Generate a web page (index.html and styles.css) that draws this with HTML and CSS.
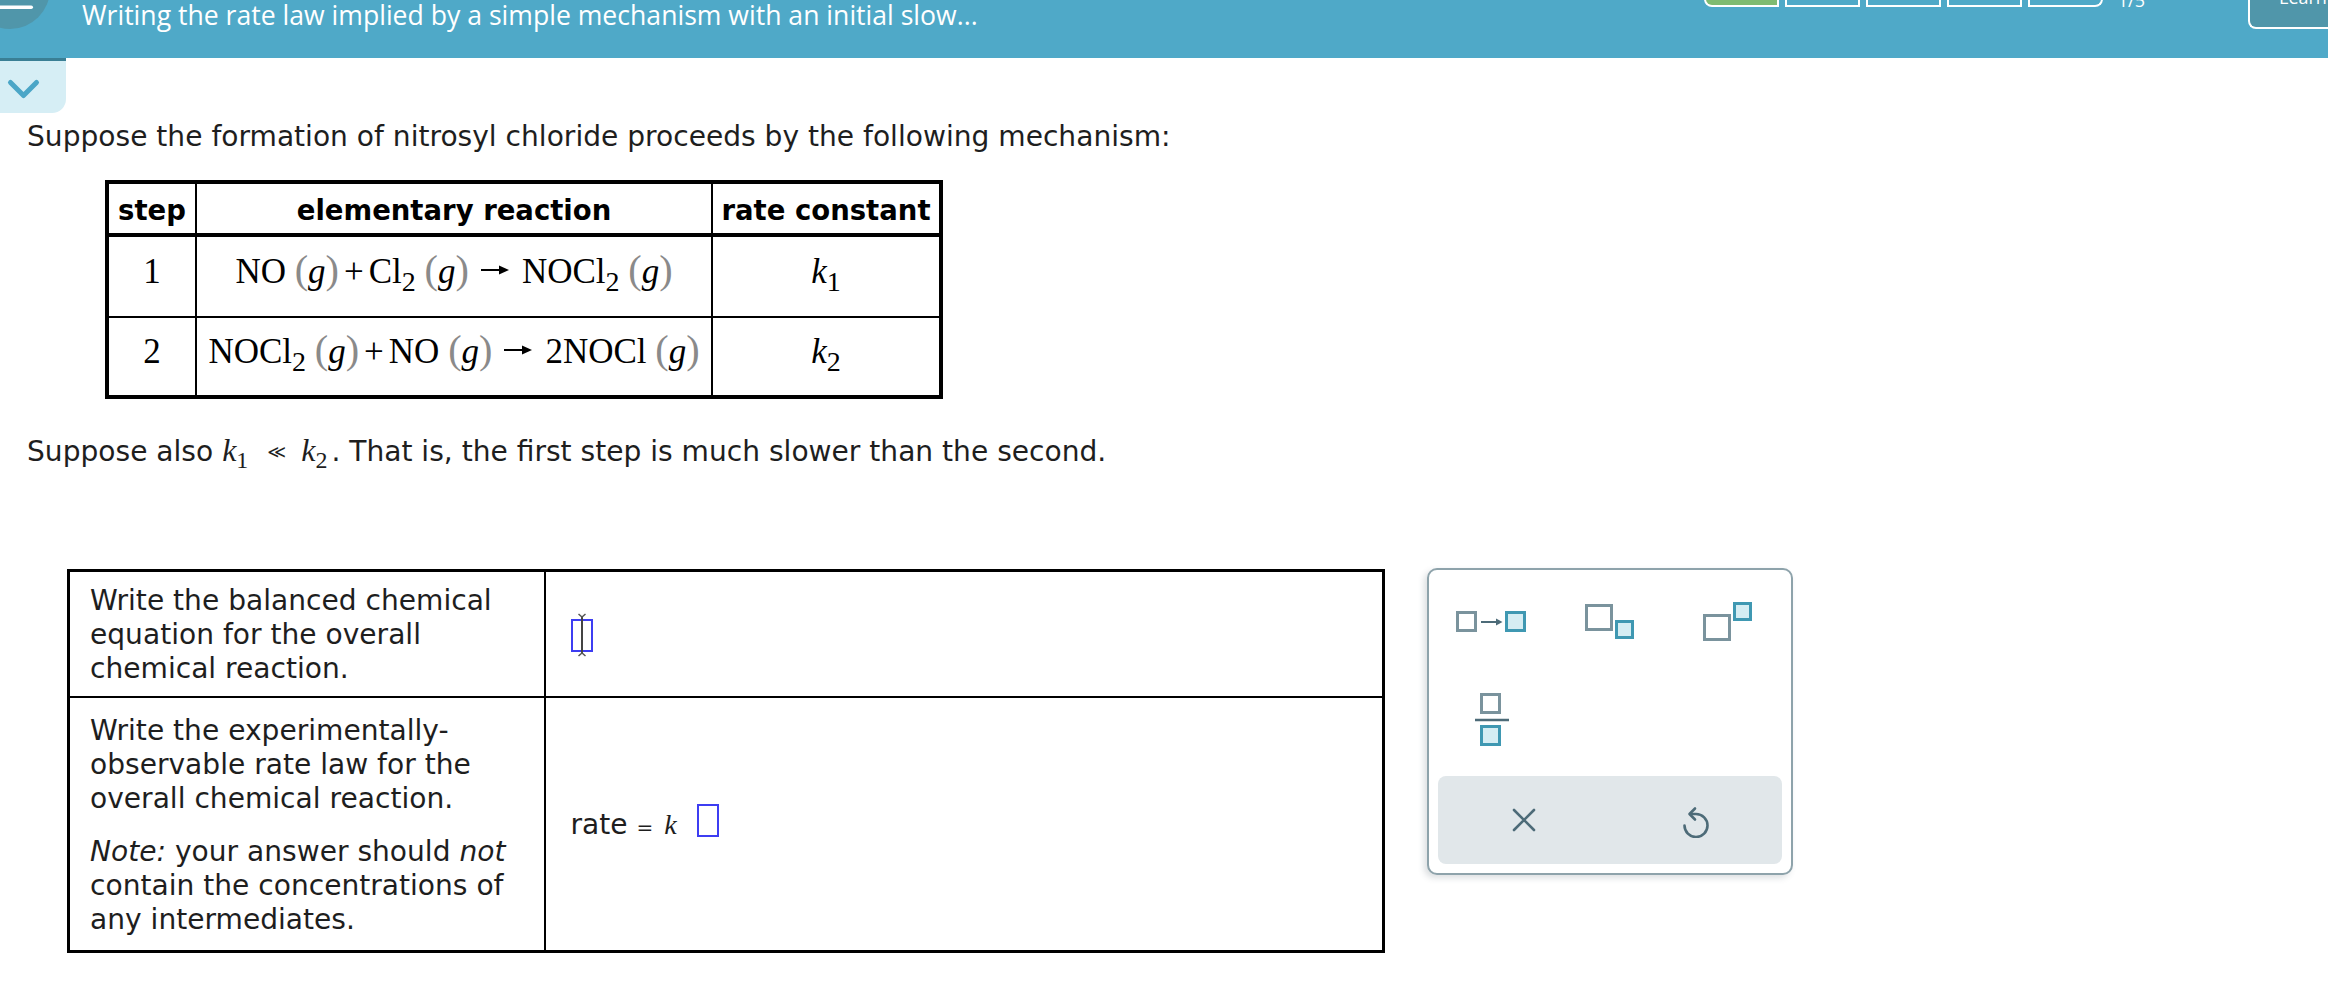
FILE: index.html
```html
<!DOCTYPE html>
<html lang="en">
<head>
<meta charset="utf-8">
<title>Rate law</title>
<link rel="stylesheet" href="styles.css">
</head>
<body>
<header class="topbar">
  <svg class="menu-btn" width="80" height="80" viewBox="0 0 80 80"><circle cx="40" cy="40" r="40" fill="#5096aa"/><rect x="18" y="56.5" width="45" height="3.5" rx="1.75" fill="#fff"/></svg>
  <div class="title">Writing the rate law implied by a simple mechanism with an initial slow...</div>
  <div class="progress"><span class="seg done"></span><span class="seg"></span><span class="seg"></span><span class="seg"></span><span class="seg last"></span></div>
  <div class="count">1/5</div>
  <div class="learn">Learn</div>
</header>
<div class="tab"><svg width="36" height="22" viewBox="0 0 36 22"><path d="M4.5 4.5 L17.5 17.5 L30.5 4.5" fill="none" stroke="#4ba6c7" stroke-width="5" stroke-linecap="round" stroke-linejoin="round"/></svg></div>
<main class="content">
  <p class="intro">Suppose the formation of nitrosyl chloride proceeds by the following mechanism:</p>
  <table class="mech">
    <colgroup><col class="c-step"><col class="c-rx"><col class="c-k"></colgroup>
    <tr class="mh"><th>step</th><th>elementary reaction</th><th>rate constant</th></tr>
    <tr class="m1">
      <td class="num">1</td>
      <td class="eqn">NO <span class="pa">(</span><i>g</i><span class="pa">)</span><span class="op">+</span>Cl<sub>2</sub> <span class="pa">(</span><i>g</i><span class="pa">)</span><svg class="arr" width="30" height="12" viewBox="0 0 30 12"><path d="M1 6 H21" stroke="#000" stroke-width="2"/><path d="M19 1.5 L29 6 L19 10.5 Z" fill="#000"/></svg>NOCl<sub>2</sub> <span class="pa">(</span><i>g</i><span class="pa">)</span></td>
      <td class="kc"><i>k</i><sub>1</sub></td>
    </tr>
    <tr class="m2">
      <td class="num">2</td>
      <td class="eqn">NOCl<sub>2</sub> <span class="pa">(</span><i>g</i><span class="pa">)</span><span class="op">+</span>NO <span class="pa">(</span><i>g</i><span class="pa">)</span><svg class="arr" width="30" height="12" viewBox="0 0 30 12"><path d="M1 6 H21" stroke="#000" stroke-width="2"/><path d="M19 1.5 L29 6 L19 10.5 Z" fill="#000"/></svg>2NOCl <span class="pa">(</span><i>g</i><span class="pa">)</span></td>
      <td class="kc"><i>k</i><sub>2</sub></td>
    </tr>
  </table>
  <p class="also">Suppose also <i class="kk">k</i><sub class="ks">1</sub><span class="ll">≪</span><i class="kk">k</i><sub class="ks ks-end">2</sub>. That is, the first step is much slower than the second.</p>
  <div class="work">
    <table class="answers">
      <tr class="a1">
        <td class="q"><p>Write the balanced chemical equation for the overall chemical reaction.</p></td>
        <td class="a"><span class="slot slot-active"><svg class="ibeam" width="12" height="44" viewBox="0 0 12 44"><path d="M6 3 V41" stroke="#444" stroke-width="2"/><path d="M2.5 1 L6 4 L9.5 1 M2.5 43 L6 40 L9.5 43" fill="none" stroke="#555" stroke-width="1.5"/></svg></span></td>
      </tr>
      <tr class="a2">
        <td class="q"><p>Write the experimentally-observable rate law for the overall chemical reaction.</p><p><em>Note:</em> your answer should <em>not</em> contain the concentrations of any intermediates.</p></td>
        <td class="a"><span class="rate">rate</span><span class="eqs">=</span><i class="kv">k</i><span class="slot"></span></td>
      </tr>
    </table>
    <div class="keypad">
      <div class="keys">
        <div class="key"><svg width="72" height="22" viewBox="0 0 72 22"><rect x="1.5" y="1.5" width="18" height="18" fill="#fff" stroke="#7a939d" stroke-width="3"/><path d="M25 11 H42" stroke="#4d6b78" stroke-width="2"/><path d="M40 7.5 L46.5 11 L40 14.5 Z" fill="#4d6b78"/><rect x="50.5" y="1.5" width="18" height="18" fill="#d5edf3" stroke="#3f98b2" stroke-width="3"/></svg></div>
        <div class="key"><svg width="50" height="36" viewBox="0 0 50 36"><rect x="1.5" y="1.5" width="25" height="24" fill="#fff" stroke="#7a939d" stroke-width="3"/><rect x="31.5" y="17.5" width="16" height="16" fill="#d5edf3" stroke="#3f98b2" stroke-width="3"/></svg></div>
        <div class="key"><svg width="50" height="40" viewBox="0 0 50 40"><rect x="1.5" y="13.5" width="25" height="24" fill="#fff" stroke="#7a939d" stroke-width="3"/><rect x="31.5" y="1.5" width="16" height="16" fill="#d5edf3" stroke="#3f98b2" stroke-width="3"/></svg></div>
        <div class="key"><svg width="36" height="54" viewBox="0 0 36 54"><rect x="7.5" y="1.5" width="18" height="18" fill="#fff" stroke="#7a939d" stroke-width="3"/><path d="M1 27 H35" stroke="#4d6b78" stroke-width="2.5"/><rect x="7.5" y="33.5" width="18" height="18" fill="#d5edf3" stroke="#3f98b2" stroke-width="3"/></svg></div>
      </div>
      <div class="actions">
        <div class="act"><svg width="26" height="26" viewBox="0 0 26 26"><path d="M3 3 L23 23 M23 3 L3 23" stroke="#4d6b78" stroke-width="2.6" stroke-linecap="round"/></svg></div>
        <div class="act"><svg width="30" height="36" viewBox="0 0 30 36"><path d="M10 12 H15 A11.5 11.5 0 1 1 3.5 23.5" fill="none" stroke="#4d6b78" stroke-width="2.6" stroke-linecap="round"/><path d="M14 6.5 L8.5 12 L14 17.5" fill="none" stroke="#4d6b78" stroke-width="2.6" stroke-linecap="round" stroke-linejoin="round"/></svg></div>
      </div>
    </div>
  </div>
</main>
</body>
</html>
```
FILE: styles.css
```css
* { box-sizing: border-box; }
html, body { margin: 0; padding: 0; background: #fff; }
body {
  font-family: "DejaVu Sans", Verdana, sans-serif;
  color: #1e1e1e;
  width: 2328px;
  height: 993px;
  overflow: hidden;
}

/* ---------- top bar ---------- */
.topbar {
  display: flex;
  align-items: flex-start;
  height: 58px;
  background: #4fa9c8;
  overflow: hidden;
}
.menu-btn { flex: none; display: block; margin: -51px 0 0 -30px; }
.title {
  margin-left: 32px;
  font-family: "Open Sans", sans-serif;
  font-size: 26.6px;
  line-height: 30px;
  color: #fff;
  white-space: nowrap;
}
.progress { margin-left: auto; margin-top: -20px; display: flex; gap: 6px; flex: none; }
.seg { width: 75px; height: 27px; border: 2px solid #fff; border-top: 0; }
.seg.done { background: #7fbb71; border-bottom-left-radius: 8px; }
.seg.last { border-bottom-right-radius: 8px; }
.count {
  flex: none;
  margin: -10px 0 0 15px;
  font-family: "Open Sans", sans-serif;
  font-size: 18px;
  line-height: 20px;
  color: #fff;
}
.learn {
  flex: none;
  width: 80px;
  height: 40px;
  margin: -11px 0 0 103px;
  padding-left: 29px;
  border: 2px solid #fff;
  border-top: 0;
  border-right: 0;
  border-bottom-left-radius: 8px;
  background: #5096aa;
  color: #fff;
  font-family: "Open Sans", sans-serif;
  font-size: 18px;
  line-height: 16px;
  white-space: nowrap;
  overflow: hidden;
}

/* ---------- collapse tab ---------- */
.tab {
  width: 66px;
  height: 55px;
  border-top: 3px solid #3a7f95;
  background: #d6eef5;
  border-bottom-right-radius: 14px;
  padding: 17px 0 0 6px;
}
.tab svg { display: block; }

/* ---------- content ---------- */
.content { padding-left: 27px; font-size: 28.1px; line-height: 34px; }
.intro { margin: 6.5px 0 0; }

.mech {
  margin: 26px 0 0 78px;
  width: 834px;
  table-layout: fixed;
  border-collapse: collapse;
  border: 4px solid #000;
}
.c-step { width: 89px; }
.c-rx { width: 516px; }
.c-k { width: 229px; }
.mech th, .mech td { border: 2px solid #000; padding: 0; text-align: center; vertical-align: middle; }
.mech th { font-size: 27.5px; font-weight: bold; color: #000; border-bottom-width: 4px; padding-top: 3px; }
.mh { height: 53px; }
.m1 { height: 82px; }
.m2 { height: 80px; }
.mech td {
  font-family: "Liberation Serif", "Times New Roman", serif;
  font-size: 35px;
  color: #000;
  white-space: nowrap;
  padding-bottom: 9px;
}
.mech sub { font-size: 0.8em; vertical-align: -0.3em; line-height: 0; }
.pa { color: #8a8a8a; font-size: 1.15em; line-height: 0; }
.op { margin: 0 5px; }
.arr { margin: 0 12px 0 11px; vertical-align: 0.18em; }

.also { margin: 34px 0 0; }
.kk { font-family: "Liberation Serif", "Times New Roman", serif; font-size: 32px; }
.ks { font-family: "Liberation Serif", "Times New Roman", serif; font-size: 24px; vertical-align: -0.3em; line-height: 0; }
.ks-end { margin-right: 4px; }
.ll { font-size: 18px; margin: 0 15px 0 19px; vertical-align: 0.12em; }

/* ---------- answer area ---------- */
.work {
  display: flex;
  align-items: flex-start;
  gap: 42px;
  margin: 100px 0 0 40px;
}
.answers {
  width: 1318px;
  table-layout: fixed;
  border-collapse: collapse;
  border: 3px solid #000;
}
.answers td { border: 2px solid #000; vertical-align: middle; }
.answers .q { width: 476px; padding: 12px 20px 10px; }
.answers .a { padding-left: 25px; }
.answers p { margin: 0; }
.answers p + p { margin-top: 19px; }
.a1 { height: 124px; }
.a2 { height: 254px; }

.slot {
  display: inline-block;
  width: 22px;
  height: 33px;
  border: 2px solid #3d3df2;
  vertical-align: -3px;
}
.slot-active { display: inline-flex; justify-content: center; align-items: center; vertical-align: middle; }
.ibeam { flex: none; margin: -8px 0; }
.eqs { font-size: 20px; margin: 0 11px 0 9px; }
.kv { font-family: "Liberation Serif", "Times New Roman", serif; font-size: 28px; margin-right: 20px; }

/* ---------- keypad ---------- */
.keypad {
  flex: none;
  width: 366px;
  height: 307px;
  margin-top: -1px;
  border: 2px solid #8ea3ab;
  border-radius: 10px;
  background: #fff;
  box-shadow: -3px 3px 6px rgba(60, 80, 90, 0.18);
}
.keys {
  display: grid;
  grid-template-columns: repeat(3, 118px);
  grid-auto-rows: 98px;
  height: 199px;
  padding: 3px 0 0 4px;
}
.key { display: flex; align-items: center; justify-content: center; }
.key svg, .act svg { display: block; }
.actions {
  margin: 7px 9px 0;
  height: 88px;
  background: #e1e7ea;
  border-radius: 8px;
  display: grid;
  grid-template-columns: 1fr 1fr;
}
.act { display: flex; align-items: center; justify-content: center; }
```
